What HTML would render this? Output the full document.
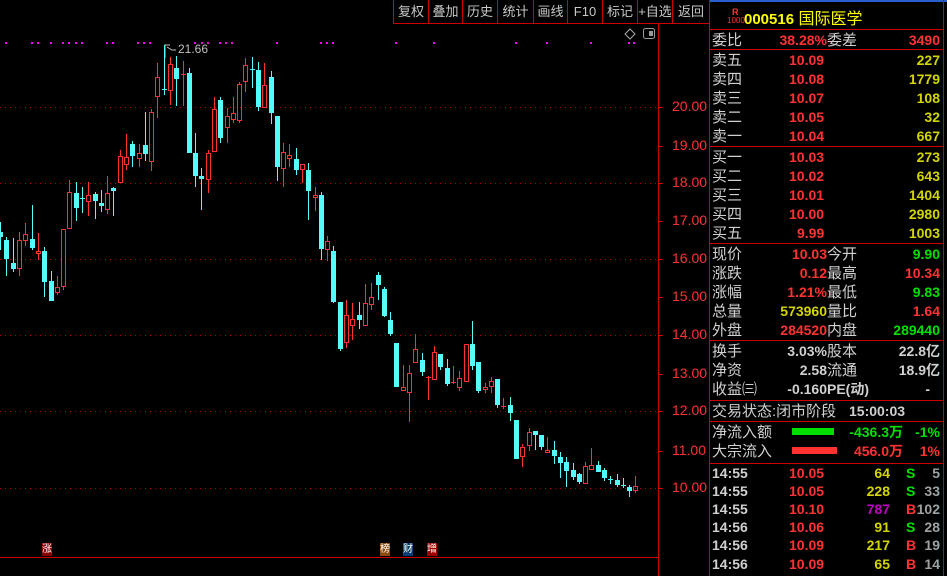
<!DOCTYPE html>
<html><head><meta charset="utf-8">
<style>
*{margin:0;padding:0;box-sizing:border-box}
body{width:947px;height:576px;background:#000;overflow:hidden;position:relative;font-family:"Liberation Sans","Noto Sans CJK SC",sans-serif;color:#c0c0c0}
.tb{position:absolute;top:0;height:24px;border-left:1px solid #c00;border-bottom:1px solid #c00;font-size:13px;line-height:24px;text-align:center;color:#c8c8c8}
.rp{position:absolute;left:709px;top:0;width:238px;height:576px}
.hl{position:absolute;left:0;width:235px;height:1px;background:#c00}
.row{position:absolute;left:0;width:234px;height:19px;font-size:15px;line-height:19px}
.row span{position:absolute;top:0;white-space:nowrap}
.n{font-weight:bold;font-size:14px}
.r{color:#ff3232}.y{color:#d4d400}.g{color:#00e000}.w{color:#d0d0d0}.m{color:#c000c0}.gr{color:#a0a0a0}
.ax{position:absolute;left:672px;font-size:14px;color:#ff3232;font-weight:normal}
.tag{position:absolute;top:543px;width:10px;height:13px;font-size:10px;line-height:13px;color:#fff;text-align:center}
</style></head><body>
<svg id="c" width="709" height="576" style="position:absolute;left:0;top:0"></svg>
<div class="tb" style="left:393px;width:35px">复权</div>
<div class="tb" style="left:428px;width:34px">叠加</div>
<div class="tb" style="left:462px;width:35px">历史</div>
<div class="tb" style="left:497px;width:36px">统计</div>
<div class="tb" style="left:533px;width:34px">画线</div>
<div class="tb" style="left:567px;width:35px">F10</div>
<div class="tb" style="left:602px;width:35px">标记</div>
<div class="tb" style="left:637px;width:35px">+自选</div>
<div class="tb" style="left:672px;width:37px">返回</div>
<div class="ax" style="top:98px">20.00</div>
<div class="ax" style="top:137px">19.00</div>
<div class="ax" style="top:174px">18.00</div>
<div class="ax" style="top:212px">17.00</div>
<div class="ax" style="top:250px">16.00</div>
<div class="ax" style="top:288px">15.00</div>
<div class="ax" style="top:326px">14.00</div>
<div class="ax" style="top:365px">13.00</div>
<div class="ax" style="top:402px">12.00</div>
<div class="ax" style="top:442px">11.00</div>
<div class="ax" style="top:479px">10.00</div>
<div style="position:absolute;left:178px;top:42px;font-size:12px;color:#c0c0c0">21.66</div>
<div class="tag" style="left:42px;background:#8b0000">涨</div>
<div class="tag" style="left:380px;background:#8b4a10">榜</div>
<div class="tag" style="left:403px;background:#0a3c78">财</div>
<div class="tag" style="left:427px;background:#900">增</div>

<div class="rp">
<div style="position:absolute;left:0;top:0;width:238px;height:2px;background:#2a5fd0"></div>
<div style="position:absolute;left:0;top:0;width:1px;height:576px;background:#c00"></div>
<div style="position:absolute;left:234px;top:0;width:1px;height:576px;background:#c00"></div>
<div style="position:absolute;left:23px;top:7px;font-size:9px;color:#ff3232;font-weight:bold">R</div>
<div style="position:absolute;left:18px;top:16px;font-size:8px;color:#ff3232">1000</div>
<div style="position:absolute;left:35px;top:5px;font-size:16px;color:#ffff00"><b style="font-size:15px">000516</b> 国际医学</div>
<div class="hl" style="top:29px"></div>
<div class="hl" style="top:49px"></div>
<div class="hl" style="top:146px"></div>
<div class="hl" style="top:243px"></div>
<div class="hl" style="top:340px"></div>
<div class="hl" style="top:400px"></div>
<div class="hl" style="top:421px"></div>
<div class="hl" style="top:463px"></div>
<div id="rows"></div>
<div style="position:absolute;left:83px;top:428px;width:42px;height:7px;background:#00e000"></div>
<div style="position:absolute;left:83px;top:447px;width:45px;height:7px;background:#ff3232"></div>
</div>
<script>
var s=document.getElementById('c'),h='';
function L(x1,y1,x2,y2,c,d){h+='<line x1="'+x1+'" y1="'+y1+'" x2="'+x2+'" y2="'+y2+'" stroke="'+c+'" stroke-width="1"'+(d?' stroke-dasharray="1 4"':'')+'/>';}
L(393,23.5,709,23.5,'#c00');
L(658.5,24,658.5,576,'#c00');
L(0,557.5,658,557.5,'#c00');
[107,183,259,335,411,488].forEach(function(y){L(0,y+.5,656,y+.5,'#a00',1)});
[107,146,183,221,259,297,335,374,411,451,488].forEach(function(y){L(658,y+.5,663,y+.5,'#c00')});
[6,32,38,51,63,69,76,82,107,113,138,144,150,195,202,208,220,226,232,277,321,327,333,396,434,516,547,591,629,634].forEach(function(x){h+='<rect x="'+(x-1)+'" y="42" width="2" height="2" fill="#f0f"/>'});
h+='<path d="M630 29 L635 34 L630 39 L625 34 Z" fill="none" stroke="#aaa"/>';
h+='<rect x="643.5" y="28.5" width="11" height="10" rx="2" fill="none" stroke="#999"/><rect x="649" y="31" width="4" height="5" fill="#999"/>';
h+='<path d="M165 58 L165 45 L170 45 M167 47 L172 50 L176 50" fill="none" stroke="#c0c0c0"/>';
var D=[[0,232,237,222,250,'c'],[6,240,259,237,276,'c'],[13,263,269,238,272,'c'],[19,240,269,232,276,'r'],[25,234,241,223,246,'r'],[32,239,248,205,250,'c'],[38,251,254,233,260,'r'],[44,251,282,247,297,'c'],[51,281,301,271,301,'c'],[57,287,293,276,295,'r'],[63,229,287,229,290,'r'],[69,192,229,180,229,'r'],[76,193,208,182,221,'c'],[82,198,198,187,213,'c'],[88,195,202,182,216,'r'],[95,194,201,192,219,'c'],[101,203,206,190,212,'c'],[107,193,210,176,214,'r'],[113,188,191,187,216,'c'],[120,156,183,150,183,'r'],[126,157,165,134,170,'r'],[132,144,156,141,167,'c'],[139,153,159,144,167,'r'],[145,145,154,112,161,'c'],[151,112,162,109,171,'r'],[157,77,97,63,118,'r'],[164,89,89,45,95,'c'],[170,64,91,57,105,'r'],[176,68,79,56,106,'c'],[183,74,74,61,106,'r'],[189,73,153,68,153,'c'],[195,153,176,133,187,'c'],[201,176,179,168,210,'c'],[208,153,180,150,193,'r'],[214,109,152,97,152,'r'],[220,100,138,97,143,'c'],[227,116,128,108,143,'r'],[233,113,120,97,123,'r'],[239,84,121,82,123,'r'],[245,65,82,58,92,'r'],[252,69,69,57,88,'c'],[258,70,107,62,111,'c'],[264,85,108,63,108,'r'],[271,77,113,71,124,'c'],[277,116,167,116,181,'c'],[283,152,169,143,187,'r'],[289,155,159,144,167,'r'],[296,159,170,148,175,'c'],[302,164,170,164,183,'r'],[308,170,191,163,220,'c'],[315,195,198,187,211,'r'],[321,195,249,192,260,'c'],[327,241,250,236,261,'r'],[333,251,302,246,303,'c'],[340,302,349,302,351,'c'],[346,315,343,300,348,'r'],[352,319,326,303,340,'r'],[359,315,320,302,329,'c'],[365,303,326,284,326,'r'],[371,297,305,283,310,'r'],[378,275,285,272,300,'c'],[384,289,316,287,317,'c'],[390,320,334,312,336,'c'],[396,343,387,343,387,'c'],[403,387,391,365,391,'r'],[409,373,393,365,422,'r'],[415,349,363,334,363,'r'],[422,360,372,353,376,'c'],[428,377,377,376,400,'r'],[434,352,380,346,380,'r'],[440,354,367,354,370,'c'],[447,368,384,359,386,'c'],[453,382,382,366,384,'r'],[459,378,388,371,391,'r'],[466,344,382,344,382,'r'],[472,344,366,321,370,'c'],[478,362,391,362,393,'c'],[485,387,390,383,393,'r'],[491,381,387,377,393,'r'],[497,379,405,379,408,'c'],[503,406,406,398,409,'r'],[510,405,413,397,421,'c'],[516,420,459,420,459,'c'],[522,447,457,444,467,'r'],[529,432,446,428,451,'r'],[535,431,435,431,450,'c'],[541,435,447,435,450,'c'],[547,450,453,437,453,'r'],[554,450,456,441,464,'c'],[560,457,463,452,478,'c'],[566,462,471,457,487,'c'],[573,470,477,463,480,'c'],[579,474,482,473,484,'c'],[585,466,484,462,484,'r'],[591,465,470,448,470,'r'],[598,465,472,461,472,'c'],[604,470,478,468,481,'c'],[610,479,479,476,484,'c'],[617,480,485,474,487,'c'],[623,485,485,478,488,'c'],[629,487,491,485,497,'c'],[635,486,491,476,493,'r']];
D.forEach(function(d){var x=d[0]+.5,t=d[1],b=d[2],hi=d[3],lo=d[4];
 if(d[5]=='c'){L(x,hi,x,lo,'#54fcfc');
  if(b-t<1){L(x-2.5,t+.5,x+2.5,t+.5,'#54fcfc')}else h+='<rect x="'+(x-2.5)+'" y="'+t+'" width="5" height="'+(b-t)+'" fill="#54fcfc"/>';}
 else{ if(b-t<1){L(x,hi,x,lo,'#ff3232');L(x-2.5,t+.5,x+2.5,t+.5,'#ff3232')}else{
  if(hi<t)L(x,hi,x,t,'#ff3232'); if(lo>b)L(x,b,x,lo,'#ff3232');
  h+='<rect x="'+(x-2)+'" y="'+(t+.5)+'" width="4" height="'+(b-t-1)+'" fill="none" stroke="#ff3232"/>';}}
});
s.innerHTML=h;
var R=[
[40,[['委比',3,'w'],['38.28%',0,'r n','M'],['委差',118,'w'],['3490',0,'r n','R']]],
[60,[['卖五',3,'w'],['10.09',80,'r n'],['227',0,'y n','R']]],
[79,[['卖四',3,'w'],['10.08',80,'r n'],['1779',0,'y n','R']]],
[98,[['卖三',3,'w'],['10.07',80,'r n'],['108',0,'y n','R']]],
[117,[['卖二',3,'w'],['10.05',80,'r n'],['32',0,'y n','R']]],
[136,[['卖一',3,'w'],['10.04',80,'r n'],['667',0,'y n','R']]],
[157,[['买一',3,'w'],['10.03',80,'r n'],['273',0,'y n','R']]],
[176,[['买二',3,'w'],['10.02',80,'r n'],['643',0,'y n','R']]],
[195,[['买三',3,'w'],['10.01',80,'r n'],['1404',0,'y n','R']]],
[214,[['买四',3,'w'],['10.00',80,'r n'],['2980',0,'y n','R']]],
[233,[['买五',3,'w'],['9.99',88,'r n'],['1003',0,'y n','R']]],
[254,[['现价',3,'w'],['10.03',0,'r n','M'],['今开',118,'w'],['9.90',0,'g n','R']]],
[273,[['涨跌',3,'w'],['0.12',0,'r n','M'],['最高',118,'w'],['10.34',0,'r n','R']]],
[292,[['涨幅',3,'w'],['1.21%',0,'r n','M'],['最低',118,'w'],['9.83',0,'g n','R']]],
[311,[['总量',3,'w'],['573960',0,'y n','M'],['量比',118,'w'],['1.64',0,'r n','R']]],
[330,[['外盘',3,'w'],['284520',0,'r n','M'],['内盘',118,'w'],['289440',0,'g n','R']]],
[351,[['换手',3,'w'],['3.03%',0,'w n','M'],['股本',118,'w'],['22.8亿',0,'w n','R']]],
[370,[['净资',3,'w'],['2.58',0,'w n','M'],['流通',118,'w'],['18.9亿',0,'w n','R']]],
[389,[['收益㈢',3,'w'],['-0.160',0,'w n','M'],['PE(动)',118,'w n'],['-',10,'w n','R']]],
[411,[['交易状态:闭市阶段',3,'w'],['15:00:03',140,'w n']]],
[432,[['净流入额',3,'w'],['-436.3万',0,'g n','X'],['-1%',0,'g n','R']]],
[451,[['大宗流入',3,'w'],['456.0万',0,'r n','X'],['1%',0,'r n','R']]]];
var tk=[['14:55','10.05','64','y','S','g','5'],['14:55','10.05','228','y','S','g','33'],['14:55','10.10','787','m','B','r','102'],['14:56','10.06','91','y','S','g','28'],['14:56','10.09','217','y','B','r','19'],['14:56','10.09','65','y','B','r','14']];
tk.forEach(function(t,i){R.push([473+i*18.2,[[t[0],3,'w n'],[t[1],80,'r n'],[t[2],0,t[3]+' n','T'],[t[4],197,t[5]+' n'],[t[6],0,'gr n','R']]])});
var o='';
R.forEach(function(r){o+='<div class="row" style="top:'+(r[0]-9.5)+'px">';r[1].forEach(function(c){var st;
 if(c[3]=='R')st='right:'+(3+c[1])+'px';else if(c[3]=='M')st='right:116px';else if(c[3]=='X')st='right:40px';else if(c[3]=='T')st='right:53px';else st='left:'+c[1]+'px';
 o+='<span class="'+c[2]+'" style="'+st+'">'+c[0]+'</span>'});o+='</div>'});
document.getElementById('rows').innerHTML=o;
</script>
</body></html>
